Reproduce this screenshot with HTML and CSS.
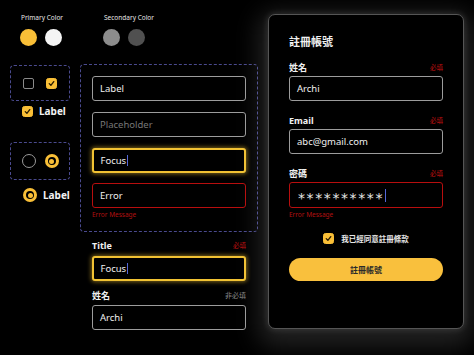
FILE: index.html
```html
<!DOCTYPE html>
<html lang="zh-Hant">
<head>
<meta charset="utf-8">
<link rel="stylesheet" href="styles.css">
</head>
<body>
<div class="page">
  <div class="left">
    <div class="swatches">
      <div class="swatch-group">
        <div class="swatch-title">Primary Color</div>
        <div class="dots"><span class="dot yellow"></span><span class="dot white"></span></div>
      </div>
      <div class="swatch-group second">
        <div class="swatch-title">Secondary Color</div>
        <div class="dots"><span class="dot gray"></span><span class="dot dark"></span></div>
      </div>
    </div>
    <div class="controls">
      <div class="small-col">
        <div class="dash-box">
          <span class="cb"></span>
          <span class="cb on"><svg viewBox="0 0 12 12"><path d="M3 6.2 L5.2 8.5 L9 3.5"/></svg></span>
        </div>
        <div class="with-label"><span class="cb on"><svg viewBox="0 0 12 12"><path d="M3 6.2 L5.2 8.5 L9 3.5"/></svg></span><span class="ctl-label">Label</span></div>
        <div class="dash-box radios">
          <span class="radio"></span>
          <span class="radio on"></span>
        </div>
        <div class="with-label"><span class="radio on"></span><span class="ctl-label">Label</span></div>
      </div>
      <div class="mid-col">
        <div class="dash-box big">
          <div class="input">Label</div>
          <div class="input ph">Placeholder</div>
          <div class="input focus">Focus<span class="caret"></span></div>
          <div class="input error">Error</div>
          <div class="err-msg">Error Message</div>
        </div>
        <div class="field-head first"><span class="flabel">Title</span><span class="req">必填</span></div>
        <div class="input focus">Focus<span class="caret"></span></div>
        <div class="field-head"><span class="flabel">姓名</span><span class="opt">非必填</span></div>
        <div class="input">Archi</div>
      </div>
    </div>
  </div>
  <div class="card">
    <div class="card-title">註冊帳號</div>
    <div class="field-head c1"><span class="flabel">姓名</span><span class="req">必填</span></div>
    <div class="input">Archi</div>
    <div class="field-head c2"><span class="flabel">Email</span><span class="req">必填</span></div>
    <div class="input">abc@gmail.com</div>
    <div class="field-head c2"><span class="flabel">密碼</span><span class="req">必填</span></div>
    <div class="input error pw"><span class="stars">**********</span><span class="caret"></span></div>
    <div class="err-msg">Error Message</div>
    <div class="agree"><span class="cb on"><svg viewBox="0 0 12 12"><path d="M3 6.2 L5.2 8.5 L9 3.5"/></svg></span><span class="agree-text">我已經同意註冊條款</span></div>
    <div class="btn">註冊帳號</div>
  </div>
</div>
</body>
</html>
```
FILE: styles.css
```css
* { box-sizing: border-box; }
html, body { margin: 0; padding: 0; background: #000; }
body {
  width: 474px; height: 355px; overflow: hidden;
  font-family: "Noto Sans", "Noto Sans CJK TC", sans-serif;
  color: #eee;
}
.page { display: flex; padding-left: 10px; }
.left { width: 248px; display: flex; flex-direction: column; }
.swatches { display: flex; padding: 13px 0 0 10px; height: 64px; }
.swatch-group { width: 83px; }
.swatch-title { font-size: 6.5px; line-height: 10px; color: #e6e6e6; padding-left: 1px; }
.dots { display: flex; gap: 8px; margin-top: 6px; }
.dot { width: 17px; height: 17px; border-radius: 50%; display: block; }
.yellow { background: #f9bf37; }
.white { background: #f4f4f4; }
.gray { background: #8c8c8c; }
.dark { background: #505050; }

.controls { display: flex; gap: 10px; align-items: flex-start; }
.small-col { width: 60px; display: flex; flex-direction: column; margin-top: 1px; }
.dash-box {
  border: 1px dashed #4a4a8e; border-radius: 4px;
  height: 36px; display: flex; align-items: center; justify-content: space-around; padding: 0 6px;
}
.dash-box.radios { height: 38px; margin-top: 25px; }
.cb {
  width: 11px; height: 11px; border: 1.5px solid #8a8a8a; border-radius: 2px; display: block;
}
.cb.on { background: #f9bf37; border-color: #f9bf37; border-radius: 2.5px; }
.cb svg { width: 100%; height: 100%; display: block; }
.cb path { fill: none; stroke: #2a1c00; stroke-width: 1.8; stroke-linecap: round; stroke-linejoin: round; }
.radio { width: 14px; height: 14px; border-radius: 50%; border: 1.3px solid #9a9a9a; display: block; }
.radio.on { border: 3px solid #f9bf37; background: #000; position: relative; }
.radio.on::after { content: ""; position: absolute; left: 1.5px; top: 1.5px; width: 5px; height: 5px; border-radius: 50%; background: #f9bf37; }
.with-label { display: flex; align-items: center; gap: 6px; padding-left: 12px; margin-top: 4px; height: 12px; }
.with-label .radio { margin-left: 1px; }
.dash-box.radios + .with-label { margin-top: 9px; }
.ctl-label { font-size: 10px; font-weight: 700; color: #f2f2f2; }

.mid-col { width: 178px; display: flex; flex-direction: column; }
.mid-col > .field-head, .mid-col > .input { margin-left: 12px; margin-right: 12px; }
.dash-box.big {
  height: 168px; display: flex; flex-direction: column; align-items: stretch; justify-content: flex-start;
  padding: 11px 11px 0;
}
.dash-box.big .input + .input { margin-top: 11px; }
.dash-box.big .input.error { margin-top: 10px; }
.input {
  height: 25px; border: 1.5px solid #9c9c9c; border-radius: 3px; background: #000;
  display: flex; align-items: center; padding-left: 7px;
  font-size: 9.5px; color: #f0f0f0;
}
.input.ph { color: #777; }
.input.focus { border: 2px solid #f1c233; box-shadow: 0 0 4px 1px rgba(241,194,51,0.5); padding-left: 6.5px; }
.input.error { border-color: #b80e0e; }
.caret { display: inline-block; width: 1px; height: 11px; background: #5468d8; margin-left: 1px; }
.err-msg { font-size: 6.5px; line-height: 9px; color: #b21010; margin-top: 2px; }

.field-head { display: flex; justify-content: space-between; align-items: center; height: 12px; }
.field-head.first { margin-top: 7px; margin-bottom: 5px; }
.mid-col .field-head:not(.first) { margin-top: 8px; margin-bottom: 4px; }
.flabel { font-size: 9px; font-weight: 700; color: #f0f0f0; }
.req { font-size: 6.5px; color: #c01010; }
.opt { font-size: 7px; color: #888; }

.card {
  margin-left: 10px; margin-top: 14px;
  width: 196px; height: 315px;
  border: 1px solid #555; border-radius: 7px; background: #000;
  padding: 20px 20px 0;
  display: flex; flex-direction: column;
  box-shadow: 0 8px 24px 10px rgba(255,255,255,0.13), 0 0 6px 1px rgba(255,255,255,0.12);
}
.card-title { font-size: 11px; font-weight: 700; line-height: 14px; color: #f0f0f0; }
.field-head.c1 { margin-top: 12px; margin-bottom: 3px; }
.field-head.c2 { margin-top: 13px; margin-bottom: 3px; }
.input.pw { height: 26px; padding-left: 8px; }
.stars { font-size: 14px; letter-spacing: 1.6px; color: #e8e8e8; line-height: 1; padding-top: 5px; font-family: "DejaVu Sans", sans-serif; }
.input.pw .caret { height: 13px; }
.agree { display: flex; align-items: center; justify-content: center; gap: 7px; margin-top: 13px; height: 12px; }
.agree-text { font-size: 7.5px; font-weight: 700; color: #e8e8e8; }
.btn {
  margin-top: 14px; height: 23px; border-radius: 12px; background: #f9c03d;
  display: flex; align-items: center; justify-content: center;
  font-size: 8px; font-weight: 700; color: #2a2a2a;
}
```
